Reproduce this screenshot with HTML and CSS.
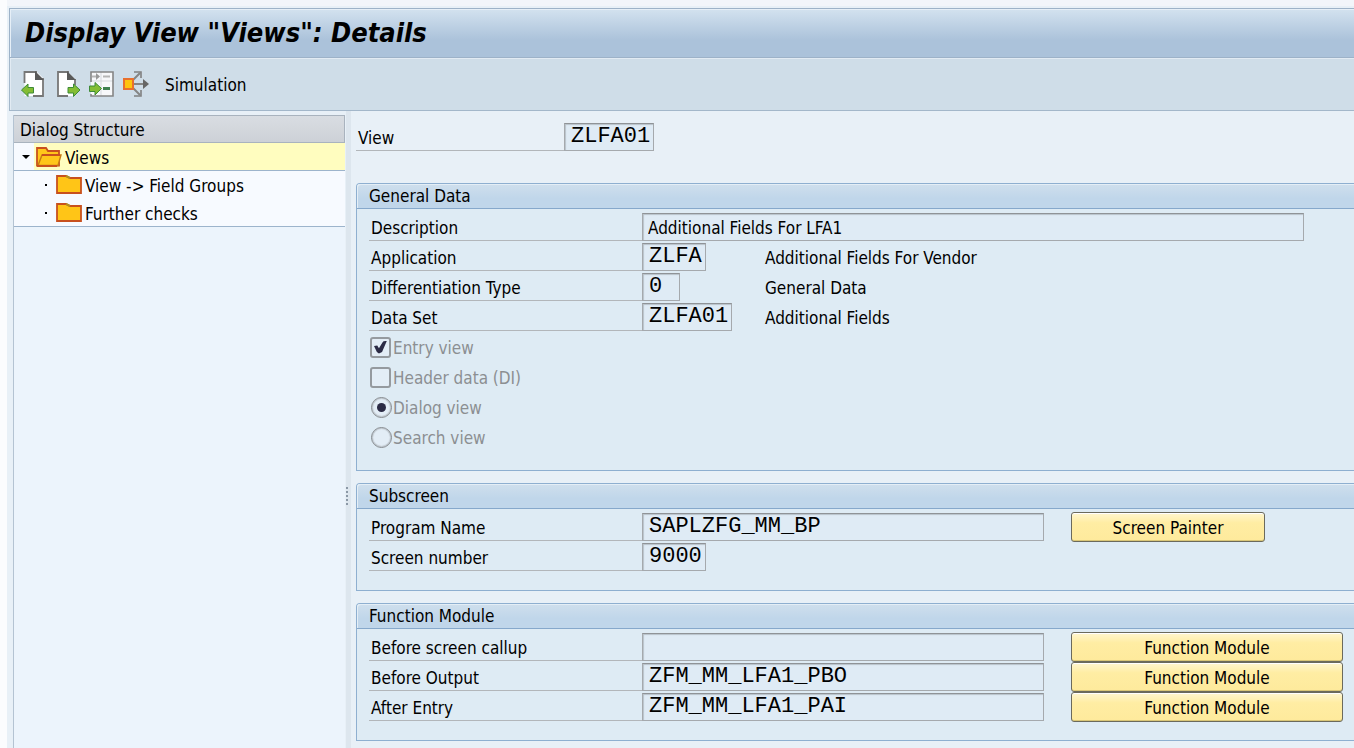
FILE: index.html
```html
<!DOCTYPE html>
<html lang="en">
<head>
    <meta charset="UTF-8">
    <meta name="viewport" content="width=device-width, initial-scale=1.0">
    <title>Display View "Views": Details</title>
    <link rel="stylesheet" href="styles.css">
</head>
<body>
    <div class="window">
        <header class="titlebar">
            <h1 class="title">Display View "Views": Details</h1>
        </header>

        <div class="toolbar">
            <button type="button" class="tool" aria-label="Previous entry">
                <svg width="26" height="26" viewBox="0 0 26 26">
                    <path d="M3.5 1H16L22 7V25H3.5Z" fill="#fff"/>
                    <path d="M3.5 12V1H16M22 7V25H12" fill="none" stroke="#777" stroke-width="1.8"/>
                    <path d="M14 0L23 9H14Z" fill="#595959"/>
                    <path d="M.5 19L7 13V16.500H12.500V22H7V25.500Z" fill="#84bd34" stroke="#3d8b37"/>
                </svg>
            </button>
            <button type="button" class="tool" aria-label="Next entry">
                <svg width="26" height="26" viewBox="0 0 26 26">
                    <path d="M3 1H13L20 8V25H3Z" fill="#fff"/>
                    <path d="M13 25H3V1H14M20 8V14" fill="none" stroke="#777" stroke-width="1.8"/>
                    <path d="M12 0L21 9H12Z" fill="#595959"/>
                    <path d="M25 19L18.500 13V16.500H13V22H18.500V25.500Z" fill="#84bd34" stroke="#3d8b37"/>
                </svg>
            </button>
            <button type="button" class="tool" aria-label="Other entry">
                <svg width="26" height="26" viewBox="0 0 26 26">
                    <path d="M2 1H24V25H2Z" fill="#f7f8fa"/>
                    <path d="M12 1V25M2 10H24" stroke="#d5d9de"/>
                    <path d="M2 11V1H24V25H2V23" fill="none" stroke="#858585" stroke-width="1.6"/>
                    <path d="M3 5.500H8M14 5.500H21" stroke="#b5b5b5" stroke-width="2"/>
                    <path d="M7 2L11 5.500L7 9Z" fill="#999"/>
                    <path d="M14 17.500H21" stroke="#3d8050" stroke-width="3"/>
                    <path d="M12.500 17.500L6 11.500V15H.5V20.500H6V24Z" fill="#84bd34" stroke="#3d8b37"/>
                </svg>
            </button>
            <button type="button" class="tool" aria-label="Field groups">
                <svg width="26" height="26" viewBox="0 0 26 26">
                    <path d="M10 9L17 2M10 17L17 24M10 13H20" fill="none" stroke="#858585" stroke-width="2"/>
                    <path d="M11 1H18V7M11 25H18V19" fill="none" stroke="#808080" stroke-width="1.6"/>
                    <path d="M20 8L26 13L20 18Z" fill="#666"/>
                    <path d="M1 8H10V18H1Z" fill="#ffc40d" stroke="#e8702e" stroke-width="2"/>
                </svg>
            </button>
            <button type="button" class="tool tool-text">Simulation</button>
        </div>

        <div class="content">
            <nav class="tree">
                <h2 class="tree-title">Dialog Structure</h2>
                <ul class="tree-list">
                    <li class="node root">
                        <span class="arrow"></span>
                        <a href="#" class="selected">
                            <svg width="26" height="20" viewBox="0 0 26 20">
                                <path d="M1 18.500V1H10L12 4H23V18.500Z" fill="#ffc61a" stroke="#c8501e" stroke-width="1.8"/>
                                <path d="M2 18.500L6 8H25L22 18.500Z" fill="#ffc61a" stroke="#c87a14" stroke-width="1.4"/>
                                <path d="M6 8H24M1 19H21" stroke="#c8501e" stroke-width="1.8"/>
                            </svg>
                            <span>Views</span>
                        </a>
                    </li>
                    <li class="node child">
                        <span class="dot"></span>
                        <a href="#">
                            <svg width="26" height="20" viewBox="0 0 26 20">
                                <path d="M1 18V1H10L14 3H25V18Z" fill="#ffc517" stroke="#c8501e" stroke-width="1.8"/>
                                <path d="M10 1L14 3" stroke="#b09020" stroke-width="2"/>
                            </svg>
                            <span>View -&gt; Field Groups</span>
                        </a>
                    </li>
                    <li class="node child">
                        <span class="dot"></span>
                        <a href="#">
                            <svg width="26" height="20" viewBox="0 0 26 20">
                                <path d="M1 18V1H10L14 3H25V18Z" fill="#ffc517" stroke="#c8501e" stroke-width="1.8"/>
                                <path d="M10 1L14 3" stroke="#b09020" stroke-width="2"/>
                            </svg>
                            <span>Further checks</span>
                        </a>
                    </li>
                </ul>
            </nav>

            <div class="splitter"><span class="grip"></span></div>

            <form class="details">
                <div class="row view-row">
                    <label for="view">View</label>
                    <input type="text" id="view" class="field w6" value="ZLFA01" readonly>
                </div>

                <section class="group">
                    <h2 class="group-title">General Data</h2>
                    <div class="group-body">
                        <div class="row wide">
                            <label for="description">Description</label>
                            <input type="text" id="description" class="field text" value="Additional Fields For LFA1" readonly>
                        </div>
                        <div class="row short">
                            <label for="application">Application</label>
                            <input type="text" id="application" class="field w4" value="ZLFA" readonly>
                            <span class="note">Additional Fields For Vendor</span>
                        </div>
                        <div class="row short">
                            <label for="difftype">Differentiation Type</label>
                            <input type="text" id="difftype" class="field w1" value="0" readonly>
                            <span class="note">General Data</span>
                        </div>
                        <div class="row short">
                            <label for="dataset">Data Set</label>
                            <input type="text" id="dataset" class="field w6" value="ZLFA01" readonly>
                            <span class="note">Additional Fields</span>
                        </div>
                        <div class="option">
                            <input type="checkbox" id="entry" checked disabled>
                            <label for="entry">Entry view</label>
                        </div>
                        <div class="option">
                            <input type="checkbox" id="header" disabled>
                            <label for="header">Header data (DI)</label>
                        </div>
                        <div class="option">
                            <input type="radio" name="viewtype" id="dialog" checked disabled>
                            <label for="dialog">Dialog view</label>
                        </div>
                        <div class="option">
                            <input type="radio" name="viewtype" id="search" disabled>
                            <label for="search">Search view</label>
                        </div>
                    </div>
                </section>

                <section class="group">
                    <h2 class="group-title">Subscreen</h2>
                    <div class="group-body">
                        <div class="row long">
                            <label for="program">Program Name</label>
                            <input type="text" id="program" class="field w30" value="SAPLZFG_MM_BP" readonly>
                            <button type="button" class="action small">Screen Painter</button>
                        </div>
                        <div class="row long">
                            <label for="screen">Screen number</label>
                            <input type="text" id="screen" class="field w4" value="9000" readonly>
                        </div>
                    </div>
                </section>

                <section class="group">
                    <h2 class="group-title">Function Module</h2>
                    <div class="group-body">
                        <div class="row long">
                            <label for="callup">Before screen callup</label>
                            <input type="text" id="callup" class="field w30" value="" readonly>
                            <button type="button" class="action">Function Module</button>
                        </div>
                        <div class="row long">
                            <label for="output">Before Output</label>
                            <input type="text" id="output" class="field w30" value="ZFM_MM_LFA1_PBO" readonly>
                            <button type="button" class="action">Function Module</button>
                        </div>
                        <div class="row long">
                            <label for="after">After Entry</label>
                            <input type="text" id="after" class="field w30" value="ZFM_MM_LFA1_PAI" readonly>
                            <button type="button" class="action">Function Module</button>
                        </div>
                    </div>
                </section>
            </form>
        </div>
    </div>
</body>
</html>
```
FILE: styles.css
```css
* {
    box-sizing: border-box;
}

body {
    margin: 0;
    padding-left: 7px;
    background: #fbfcfe;
    color: #000;
    font-family: "DejaVu Sans Condensed", "Noto Sans", sans-serif;
    font-size: 17px;
    line-height: 24px;
}

h1, h2, ul {
    margin: 0;
    padding: 0;
}

button, input {
    font: inherit;
    color: inherit;
    margin: 0;
}

.window {
    display: flex;
    flex-direction: column;
    min-height: 100vh;
    padding-left: 2px;
    border-top: 6px solid #f2f5fa;
    background: #e8f0f7;
}

.titlebar {
    margin-top: 2px;
    padding: 6px 15px;
    height: 50px;
    border: 1px solid #9db2c8;
    border-right: none;
    background: linear-gradient(#d3e2ef, #abc2da 65%, #abc2da);
    box-shadow: inset 1px 1px #e6eff7;
}

.title {
    font-size: 27px;
    font-weight: bold;
    font-style: italic;
    line-height: 36px;
}

.toolbar {
    display: flex;
    align-items: center;
    gap: 8px;
    height: 53px;
    padding-left: 11px;
    border: 1px solid #a3b7ca;
    border-top: none;
    border-right: none;
    background: #cfdde8;
    box-shadow: inset 1px 1px #e2ebf3;
}

.tool {
    padding: 0;
    border: none;
    background: none;
}

.tool svg, .node svg {
    display: block;
}

.tool-text {
    margin-left: 8px;
    padding-top: 2px;
}

.content {
    display: flex;
    flex: 1;
}

/* tree */
.tree {
    width: 332px;
    margin: 4px 0 0 4px;
    border-left: 1px solid #b4c3d2;
    background: #ecf4fc;
    flex-shrink: 0;
}

.tree-title {
    height: 28px;
    padding-left: 6px;
    border: 1px solid #a9b3be;
    border-left: none;
    background: linear-gradient(#d9dde2, #cdd1d7);
    font-size: 17px;
    font-weight: normal;
    line-height: 28px;
}

.tree-list {
    list-style: none;
    background: #f7faff;
    border-bottom: 1px solid #9db4cc;
}

.node {
    display: flex;
    align-items: center;
    height: 28px;
}

.root {
    border-bottom: 1px solid #9db4cc;
}

.child:last-child {
    height: 27px;
}

.node a {
    display: flex;
    align-items: center;
    gap: 3px;
    flex: 1;
    height: 100%;
    color: #000;
    text-decoration: none;
}

.node a span {
    padding-top: 2px;
}

.root a {
    padding-left: 2px;
}

.node .selected {
    background: #fffdbf;
}

.arrow {
    margin: 0 4px 0 8px;
    border: 4px solid transparent;
    border-top-color: #000;
    border-bottom: none;
}

.dot {
    width: 2px;
    height: 2px;
    margin: 0 9px 0 31px;
    background: #000;
}

.splitter {
    display: flex;
    align-items: center;
    width: 5px;
    margin-left: 1px;
    background: #dde6ee;
}

.grip {
    width: 2px;
    height: 18px;
    margin-top: 120px;
    background: repeating-linear-gradient(#8b98a6 0 2px, transparent 2px 4px);
}

/* details */
.details {
    flex: 1;
    min-width: 0;
    padding: 11px 0 7px 5px;
}

.row {
    display: grid;
    align-items: center;
    height: 30px;
}

.row label {
    height: 28px;
    padding: 3px 0 0 2px;
    border-bottom: 1px solid #b2b6ba;
}

.note {
    padding-top: 2px;
}

.view-row {
    grid-template-columns: 208px 1fr;
    margin-bottom: 31px;
}

.wide {
    grid-template-columns: 273px 1fr;
    padding-right: 50px;
}

.short {
    grid-template-columns: 273px 123px 1fr;
}

.long {
    grid-template-columns: 273px 429px 1fr;
}

.field {
    height: 28px;
    padding: 0 0 1px 6px;
    border: 1px solid #a5a9ad;
    border-top-color: #8f9397;
    border-radius: 0;
    background: #dfebf5;
    box-shadow: inset 1px 1px 1px #b9c2ca;
    font-family: "Liberation Mono", monospace;
    font-size: 22px;
    line-height: 24px;
    outline: none;
}

.field.text {
    width: 100%;
    padding: 2px 5px 0;
    font-family: inherit;
    font-size: 17px;
}

.w1 {
    width: 38px;
}

.w4 {
    width: 64px;
}

.w6 {
    width: 90px;
}

.w30 {
    width: 402px;
}

.group {
    margin-bottom: 12px;
    border: 1px solid #8eafd0;
    border-right: none;
    border-radius: 4px 0 0 0;
    background: #deebf4;
}

.group-title {
    height: 25px;
    padding-left: 12px;
    border-bottom: 1px solid #86a8cb;
    border-radius: 3px 0 0 0;
    background: linear-gradient(#cfdfed, #c0d6ea 60%);
    box-shadow: inset 1px 1px #e4eef6;
    font-size: 17px;
    font-weight: normal;
    line-height: 24px;
}

.group-body {
    padding: 3px 0 18px 12px;
}

.option {
    display: flex;
    align-items: center;
    height: 30px;
    padding-left: 1px;
    gap: 2px;
    color: #8c8f92;
}

.option label {
    padding-top: 2px;
}

.option input {
    appearance: none;
    display: grid;
    place-items: center;
    width: 21px;
    height: 21px;
    border: 2px solid #959a9f;
    border-radius: 3px;
    background: #e3edf6;
}

.option input[type="radio"] {
    margin-left: 1px;
    border: 1px solid #85898d;
    border-radius: 50%;
    box-shadow: inset 0 0 1px 1px #bcc4cb;
}

.option input[type="radio"] + label {
    margin-left: -1px;
}

.option input[type="checkbox"]:checked::before {
    content: "";
    width: 13px;
    height: 13px;
    background: #2b2b45;
    clip-path: polygon(0 42%, 25% 38%, 38% 60%, 70% 8%, 100% 0, 62% 88%, 38% 100%, 22% 88%);
}

.option input[type="radio"]:checked::before {
    content: "";
    width: 9px;
    height: 9px;
    border-radius: 50%;
    background: #2b2b45;
}

.action {
    width: 272px;
    height: 30px;
    padding: 2px 0 0;
    border: 1px solid #6b6a5c;
    border-radius: 3px;
    background: linear-gradient(#fff6cf, #ffeda3 35%, #feea9c);
    box-shadow: inset 0 1px #fff, inset 0 -1px #d9c677;
}

.small {
    width: 194px;
}
```
